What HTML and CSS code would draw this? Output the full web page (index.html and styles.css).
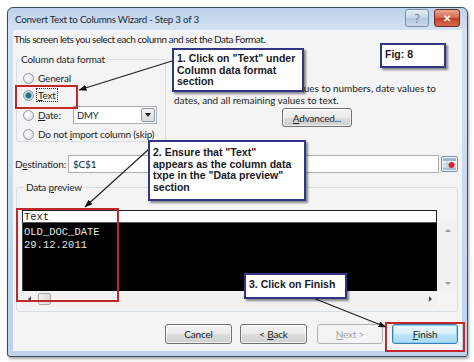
FILE: index.html
```html
<!DOCTYPE html>
<html>
<head>
<meta charset="utf-8">
<link rel="stylesheet" href="styles.css">
</head>
<body>
<div class="page">
  <div class="window">
    <div class="titlebar">
      <span class="title">Convert Text to Columns Wizard - Step 3 of 3</span>
      <span class="cap help">?</span>
      <span class="cap close">✕</span>
    </div>
    <div class="client">
      <p class="intro">This screen lets you select each column and set the Data Format.</p>
      <div class="format-row">
        <fieldset class="group format">
          <legend>Column data format</legend>
          <div class="radios">
            <div class="radio"><span class="dot"></span><span>General</span></div>
            <div class="radio"><span class="dot on"></span><span class="focus"><u>T</u>ext</span></div>
            <div class="radio date"><span class="dot"></span><span class="date-label"><u>D</u>ate:</span><span class="select"><span class="sel-val">DMY</span><span class="sel-btn"><i class="tri tri-down"></i></span></span></div>
            <div class="radio"><span class="dot"></span><span>Do not <u>i</u>mport column (skip)</span></div>
          </div>
        </fieldset>
        <div class="explain">
          <p>'General' converts numeric values to numbers, date values to<br>dates, and all remaining values to text.</p>
          <button class="btn adv"><u>A</u>dvanced...</button>
        </div>
      </div>
      <div class="dest-row">
        <span class="dest-label">D<u>e</u>stination:</span>
        <span class="input">$C$1</span>
        <span class="ref-icon">
          <svg width="17" height="16" viewBox="0 0 17 16">
            <rect x="0.5" y="0.5" width="16" height="15" rx="1.5" fill="#eef3f9" stroke="#7d91ab"/>
            <rect x="2" y="2" width="13" height="3" fill="#9fb6d3"/>
            <line x1="2" y1="8" x2="15" y2="8" stroke="#9fb6d3"/>
            <line x1="2" y1="11" x2="15" y2="11" stroke="#9fb6d3"/>
            <line x1="6" y1="5" x2="6" y2="14" stroke="#b9c9dc"/>
            <rect x="2" y="12" width="13" height="2" fill="#a7bcd7"/>
            <circle cx="10.5" cy="9" r="3" fill="#d8232a"/>
          </svg>
        </span>
      </div>
      <fieldset class="group preview">
        <legend>Data <u>p</u>review</legend>
        <div class="grid">
          <div class="grid-head">Text</div>
          <div class="grid-body">OLD_DOC_DATE<br>29.12.2011</div>
          <div class="vscroll"><i class="tri tri-up"></i><i class="tri tri-down"></i></div>
          <div class="hscroll"><i class="tri tri-left"></i><span class="thumb"></span><i class="tri tri-right"></i></div>
        </div>
      </fieldset>
      <div class="buttons">
        <button class="btn">Cancel</button>
        <button class="btn back">&lt; <u>B</u>ack</button>
        <button class="btn next" disabled><u>N</u>ext &gt;</button>
        <button class="btn finish"><u>F</u>inish</button>
      </div>
    </div>
  </div>
</div>

<div class="hl hl-text"></div>
<div class="hl hl-preview"></div>
<div class="hl hl-finish"></div>

<svg class="arrows" width="474" height="362" viewBox="0 0 474 362">
  <defs>
    <marker id="ah" markerWidth="8" markerHeight="6" refX="7.5" refY="3" orient="auto" markerUnits="userSpaceOnUse">
      <path d="M0,0 L8,3 L0,6 Z" fill="#111"/>
    </marker>
  </defs>
  <line x1="172" y1="61" x2="79" y2="90" stroke="#222" stroke-width="1.2" marker-end="url(#ah)"/>
  <line x1="149" y1="149" x2="85" y2="207" stroke="#222" stroke-width="1.2" marker-end="url(#ah)"/>
  <line x1="313" y1="298" x2="386" y2="327" stroke="#222" stroke-width="1.2" marker-end="url(#ah)"/>
</svg>

<div class="callout c1">1. Click on "Text" under<br>Column data format<br>section</div>
<div class="callout fig">Fig: 8</div>
<div class="callout c2">2. Ensure that "Text"<br>appears as the column data<br>txpe in the "Data preview"<br>section</div>
<div class="callout c3">3. Click on Finish</div>
</body>
</html>
```
FILE: styles.css
```css
* { box-sizing: border-box; }
html, body { margin: 0; padding: 0; background: #fff; }
body {
  width: 474px; height: 362px; overflow: hidden; position: relative;
  font-family: Lato, "Open Sans", sans-serif; font-size: 10px; letter-spacing: -0.2px; color: #1e1e1e;
}
u { text-decoration: underline; text-underline-offset: 1px; }
.page { padding: 7px 0 0 7px; }
.window {
  width: 461px; height: 350px;
  border: 1px solid #3e4b5a; border-radius: 6px 6px 3px 3px;
  background: linear-gradient(#bcd2ea, #d3e2f2 22px, #c6d9ed 60%, #bcd3ea);
  box-shadow: 1px 2px 3px rgba(0,0,0,.35);
  padding: 0 5px 5px 5px;
  display: flex; flex-direction: column;
}
.titlebar { height: 22px; display: flex; align-items: center; padding: 0 2px 0 2px; white-space: nowrap; }
.title { font-size: 9.8px; letter-spacing: -0.25px; color: #1c2a3b; flex: 1; }
.cap {
  height: 18px; margin-top: -2px; display: flex; align-items: center; justify-content: center;
  border-radius: 3px; font-size: 12px; letter-spacing: 0;
}
.help {
  width: 24px; border: 1px solid #7a8ea6; color: #6b7c90;
  background: linear-gradient(#e3edf7, #c5d7ea 50%, #b2c9e1 51%, #c6d8ec);
  margin-right: 5px; font-family: "Open Sans", sans-serif;
}
.close {
  width: 26px; border: 1px solid #6e2b22; color: #fff; font-size: 10px; font-weight: 700;
  background: linear-gradient(#eaa590, #d4664f 50%, #c23f2a 51%, #d46a4e);
}
.client {
  flex: 1; background: #f4f4f4; position: relative;
  padding: 3px 4px 0 0; white-space: nowrap;
}
.intro { margin: 0 0 0 1px; line-height: 13px; letter-spacing: -0.5px; }
.format-row { display: flex; margin-top: 7px; }
.group {
  margin: 0; padding: 0; border: 1px solid #d5dfe5; border-radius: 3px; min-width: 0;
}
.group legend { padding: 0 2px; margin-left: 2px; line-height: 13px; }
.format { margin-left: 3px; width: 150px; flex: none; }
.radios { display: flex; flex-direction: column; padding: 5px 0 0 6px; }
.radio { display: flex; align-items: center; height: 14px; margin-bottom: 3px; }
.radio.date { height: 18px; margin-bottom: 3px; margin-top: 1px; }
.radio:last-child { margin-bottom: 0; }
.dot {
  width: 11px; height: 11px; border-radius: 50%; border: 1px solid #8e9aa6;
  background: radial-gradient(circle at 40% 35%, #ffffff, #e4e8ec 60%, #cfd5db);
  margin-right: 4px; flex: none;
}
.dot.on {
  background: radial-gradient(circle, #1f5f73 0, #2c7f96 2.5px, #bcd2dc 3.5px, #e8eef2 5px);
}
.focus { outline: 1px dotted #333; outline-offset: 0; padding: 0 1px; margin-left: -1px; }
.date-label { width: 35px; }
.select {
  display: flex; width: 84px; height: 18px; border: 1px solid #abadb3; background: #fff;
  align-items: center;
}
.sel-val { flex: 1; padding-left: 3px; font-size: 9.5px; }
.sel-btn {
  width: 14px; height: 14px; margin-right: 1px; border: 1px solid #8d9aa8; border-radius: 2px;
  background: linear-gradient(#f3f3f3, #dcdcdc); display: flex; align-items: center; justify-content: center;
}
.tri { display: block; width: 0; height: 0; border-style: solid; }
.tri-down { border-width: 4px 3.5px 0 3.5px; border-color: #222 transparent transparent transparent; }
.explain { flex: 1; margin-left: 8px; padding-top: 29px; text-align: center; }
.explain p { margin: 0; line-height: 12px; text-align: left; letter-spacing: -0.05px; }
.btn {
  font-family: inherit; font-size: 10px; letter-spacing: inherit; color: #1e1e1e; padding: 0;
  height: 20px; border: 1px solid #707070; border-radius: 3px;
  background: linear-gradient(#f2f2f2, #ebebeb 50%, #dddddd 51%, #cfcfcf);
  box-shadow: inset 0 0 0 1px rgba(255,255,255,.7);
}
.adv { width: 70px; height: 19px; margin-top: 2px; margin-left: 2px; }
.dest-row { display: flex; align-items: center; margin-top: 13px; height: 18px; }
.dest-label { margin-left: 2px; width: 53px; }
.input {
  width: 371px; height: 18px; border: 1px solid #abadb3; background: #fff;
  padding-left: 4px; line-height: 16px;
}
.ref-icon { margin-left: 2px; width: 17px; height: 16px; display: flex; }
.preview { margin: 8px 0 0 3px; width: 442px; padding: 0 0 4px 5px; }
.grid {
  margin-top: 16px;
  display: grid; grid-template-columns: 415px 19px; grid-template-rows: 13px 68px 16px;
}
.grid-head {
  grid-column: 1; grid-row: 1; background: #fff; border: 1px solid #222; border-bottom: 1px solid #555;
  font-family: "Liberation Mono", monospace; font-size: 10.5px; letter-spacing: 0; line-height: 12px; padding-left: 1px;
}
.grid-body {
  grid-column: 1; grid-row: 2; background: #000; color: #e6e6e6;
  font-family: "Liberation Mono", monospace; font-size: 10.5px; letter-spacing: 0; line-height: 12.5px;
  padding: 3px 0 0 1px; border-left: 1px solid #444;
}
.vscroll {
  grid-column: 2; grid-row: 2; background: #f1f1f1;
  display: flex; flex-direction: column; justify-content: space-between; align-items: center;
  padding: 6px 0 6px 2px;
}
.tri-up { border-width: 0 3px 3.5px 3px; border-color: transparent transparent #9a9a9a transparent; }
.vscroll .tri-down { border-width: 3.5px 3px 0 3px; border-color: #9a9a9a transparent transparent transparent; }
.hscroll {
  grid-column: 1; grid-row: 3; background: #f1f1f1; display: flex; align-items: center;
  padding: 0 5px 0 6px;
}
.tri-left { border-width: 3px 3.5px 3px 0; border-color: transparent #555 transparent transparent; }
.tri-right { border-width: 3px 0 3px 3.5px; border-color: transparent transparent transparent #555; margin-left: auto; }
.thumb {
  width: 13px; height: 12px; margin-left: 7px; border: 1px solid #a8a8a8; border-radius: 2px;
  background: linear-gradient(90deg, #f0f0f0, #dcdcdc);
}
.buttons { display: flex; margin-top: 12px; padding-left: 152px; }
.buttons .btn { width: 67px; margin-right: 8px; }
.buttons .back { margin-right: 10px; }
.buttons .next {
  width: 66px; margin-right: 9px; color: #a3a3a3; border-color: #adb2b5;
  background: #f4f4f4; box-shadow: none;
}
.buttons .finish {
  width: 66px; margin-right: 0; border-color: #3c7fb1;
  background: linear-gradient(#eaf6fd, #d9f0fc 50%, #bee6fd 51%, #a7d9f5);
  box-shadow: inset 0 0 0 1px #8fd0f5;
}
.hl { position: absolute; border: 2px solid #c1272d; }
.hl-text { left: 15px; top: 85px; width: 63px; height: 24px; }
.hl-preview { left: 16px; top: 208px; width: 103px; height: 94px; }
.hl-finish { left: 385px; top: 322px; width: 80px; height: 30px; }
.arrows { position: absolute; left: 0; top: 0; }
.callout {
  position: absolute; background: #fff; border: 2px solid #353585;
  box-shadow: 2px 2px 2px rgba(0,0,0,.45); letter-spacing: 0; white-space: nowrap;
  font-family: "Liberation Sans", Arial, sans-serif; font-weight: 700; font-size: 10.5px;
  line-height: 11.7px; color: #1a1a24; padding: 3px 0 0 3px;
}
.c1 { left: 172px; top: 48px; width: 132px; height: 44px; }
.fig { left: 380px; top: 43px; width: 66px; height: 25px; padding-top: 4px; }
.c2 { left: 148px; top: 140px; width: 158px; height: 61px; padding-top: 5px; }
.c3 { left: 244px; top: 273px; width: 103px; height: 26px; padding-top: 4px; }
```
